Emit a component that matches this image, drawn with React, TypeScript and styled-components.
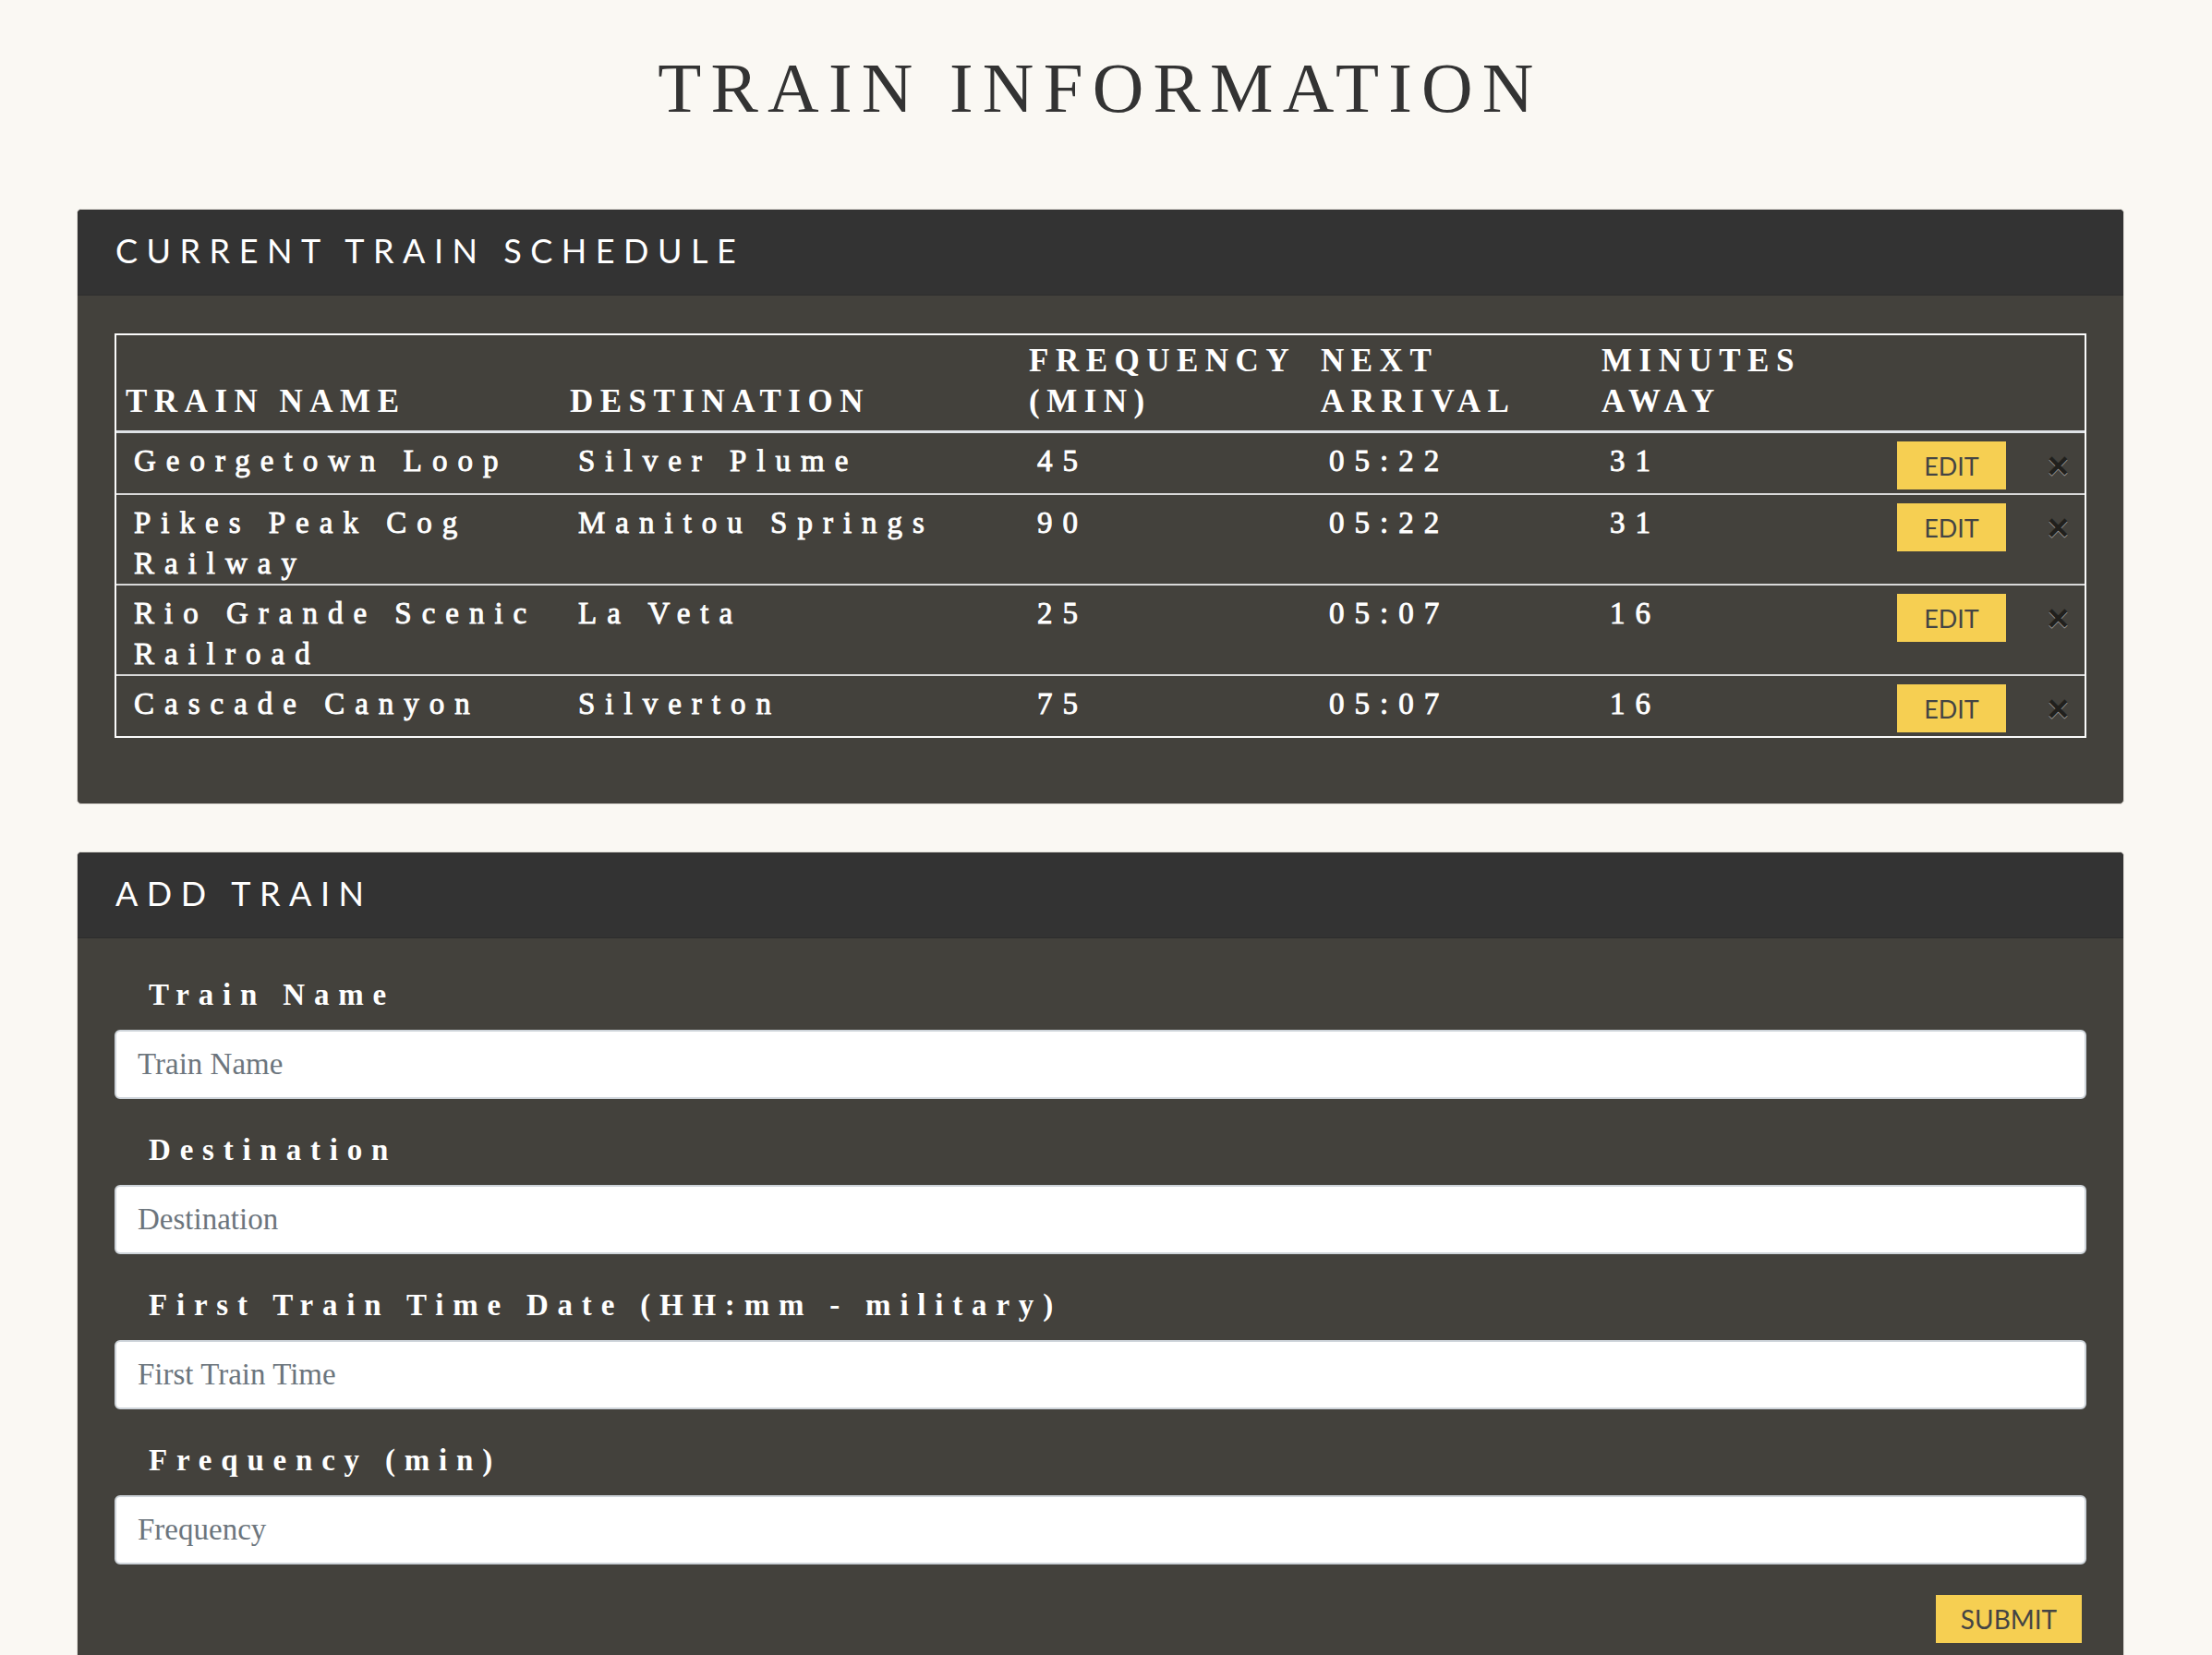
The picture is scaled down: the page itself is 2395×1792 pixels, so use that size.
import React from "react";
import styled, { createGlobalStyle } from "styled-components";

const SERIF = `"Liberation Serif", "Times New Roman", serif`;
const SANS = `Lato, "Liberation Sans", Arial, sans-serif`;

type Train = {
  name: string;
  destination: string;
  frequency: string;
  next: string;
  away: string;
};

const trains: Train[] = [
  { name: "Georgetown Loop", destination: "Silver Plume", frequency: "45", next: "05:22", away: "31" },
  { name: "Pikes Peak Cog Railway", destination: "Manitou Springs", frequency: "90", next: "05:22", away: "31" },
  { name: "Rio Grande Scenic Railroad", destination: "La Veta", frequency: "25", next: "05:07", away: "16" },
  { name: "Cascade Canyon", destination: "Silverton", frequency: "75", next: "05:07", away: "16" },
];

const columns = [
  { title: "Train Name", width: 481 },
  { title: "Destination", width: 497 },
  { title: "Frequency (min)", width: 316 },
  { title: "Next Arrival", width: 304 },
  { title: "Minutes Away", width: 320 },
  { title: "", width: 146 },
  { title: "", width: 0 },
];

const fields = [
  { label: "Train Name", placeholder: "Train Name" },
  { label: "Destination", placeholder: "Destination" },
  { label: "First Train Time Date (HH:mm - military)", placeholder: "First Train Time" },
  { label: "Frequency (min)", placeholder: "Frequency" },
];

export default function App() {
  return (
    <>
      <GlobalStyle />
      <Page>
        <Title>Train Information</Title>

        <Card>
          <CardHeader>Current Train Schedule</CardHeader>
          <CardBody $top={41} $bottom={71}>
            <ScheduleTable>
              <thead>
                <tr>
                  {columns.map((col, i) => (
                    <HeadCell key={i} $width={col.width}>
                      {col.title}
                    </HeadCell>
                  ))}
                </tr>
              </thead>
              <tbody>
                {trains.map((train) => (
                  <tr key={train.name}>
                    <Cell>{train.name}</Cell>
                    <Cell>{train.destination}</Cell>
                    <Cell>{train.frequency}</Cell>
                    <Cell>{train.next}</Cell>
                    <Cell>{train.away}</Cell>
                    <ActionCell>
                      <EditButton type="button">EDIT</EditButton>
                    </ActionCell>
                    <ActionCell>
                      <CloseButton type="button" aria-label="Remove">
                        ×
                      </CloseButton>
                    </ActionCell>
                  </tr>
                ))}
              </tbody>
            </ScheduleTable>
          </CardBody>
        </Card>

        <Card>
          <CardHeader>Add Train</CardHeader>
          <CardBody $top={39} $bottom={40}>
            <form onSubmit={(e) => e.preventDefault()}>
              {fields.map((field) => (
                <FieldGroup key={field.label}>
                  <Label>{field.label}</Label>
                  <Input type="text" placeholder={field.placeholder} />
                </FieldGroup>
              ))}
              <FormFooter>
                <SubmitButton type="submit">SUBMIT</SubmitButton>
              </FormFooter>
            </form>
          </CardBody>
        </Card>
      </Page>
    </>
  );
}

const GlobalStyle = createGlobalStyle`
  html, body {
    margin: 0;
    padding: 0;
    background: #faf8f3;
  }

  body {
    font-family: ${SERIF};
    color: #333;
  }

  * {
    box-sizing: border-box;
  }
`;

const Page = styled.div`
  padding: 49px 95px 0 83px;
`;

const Title = styled.h1`
  margin: 0 0 85px;
  font-family: ${SERIF};
  font-size: 77px;
  font-weight: 400;
  line-height: 92px;
  letter-spacing: 10.2px;
  text-transform: uppercase;
  text-align: center;
  color: #333;
`;

const Card = styled.section`
  margin-bottom: 51px;
  border: 1px solid #e2dfd9;
  border-radius: 5px;
  overflow: hidden;
  background: #43413c;
`;

const CardHeader = styled.h2`
  display: flex;
  align-items: center;
  height: 93px;
  margin: 0;
  padding: 0 41px 5px;
  background: #333333;
  border-bottom: 1px solid #2d2d2d;
  font-family: ${SANS};
  font-size: 36px;
  font-weight: 400;
  letter-spacing: 9.5px;
  text-transform: uppercase;
  color: #fff;
`;

const CardBody = styled.div<{ $top: number; $bottom: number }>`
  padding: ${(p) => p.$top}px 40px ${(p) => p.$bottom}px;
`;

const ScheduleTable = styled.table`
  width: 100%;
  table-layout: fixed;
  border-collapse: separate;
  border-spacing: 0;
  border: 2px solid #fbfbfb;
  color: #fff;
`;

const HeadCell = styled.th<{ $width: number }>`
  width: ${(p) => (p.$width ? `${p.$width}px` : "auto")};
  padding: 6px 10px 9px;
  border-bottom: 3px solid #dee2e6;
  vertical-align: bottom;
  text-align: left;
  font-family: ${SERIF};
  font-size: 35px;
  font-weight: 700;
  line-height: 44px;
  letter-spacing: 7.5px;
  text-transform: uppercase;
`;

const Cell = styled.td`
  padding: 8px 10px 0 19px;
  vertical-align: top;
  font-family: ${SERIF};
  font-size: 33px;
  font-weight: 400;
  line-height: 44px;
  letter-spacing: 11px;
  -webkit-text-stroke: 0.9px #fff;

  tr + tr > & {
    border-top: 2px solid #d9d9d9;
  }
`;

const ActionCell = styled.td`
  padding: 9px 10px 4px;
  vertical-align: top;

  tr + tr > & {
    border-top: 2px solid #d9d9d9;
  }
`;

const EditButton = styled.button`
  display: block;
  width: 118px;
  height: 52px;
  padding: 0;
  border: none;
  border-radius: 0;
  background: #f6cf52;
  font-family: ${SANS};
  font-size: 27px;
  color: #444;
  cursor: pointer;
`;

const CloseButton = styled.button`
  display: flex;
  align-items: center;
  justify-content: center;
  width: 100%;
  height: 52px;
  padding: 0 0 0 10px;
  border: none;
  background: transparent;
  font-family: "Liberation Sans", Arial, sans-serif;
  font-size: 40px;
  font-weight: 700;
  line-height: 1;
  color: #000;
  text-shadow: 0 1px 0 #fff;
  opacity: 0.5;
  cursor: pointer;
`;

const FieldGroup = styled.div`
  display: flex;
  flex-direction: column;
  margin-bottom: 33px;
`;

const Label = styled.label`
  margin: 0 0 16px;
  padding-left: 37px;
  font-family: ${SERIF};
  font-size: 33px;
  font-weight: 700;
  line-height: 44px;
  letter-spacing: 9.8px;
  color: #fff;
`;

const Input = styled.input`
  width: 100%;
  height: 75px;
  padding: 0 23px;
  border: 2px solid #ced4da;
  border-radius: 6px;
  background: #fff;
  font-family: ${SERIF};
  font-size: 33px;
  color: #495057;

  &::placeholder {
    color: #6c757d;
  }
`;

const FormFooter = styled.div`
  display: flex;
  justify-content: flex-end;
  padding-right: 5px;
`;

const SubmitButton = styled.button`
  width: 158px;
  height: 52px;
  padding: 0;
  border: none;
  border-radius: 0;
  background: #f6cf52;
  font-family: ${SANS};
  font-size: 28px;
  color: #444;
  cursor: pointer;
`;
